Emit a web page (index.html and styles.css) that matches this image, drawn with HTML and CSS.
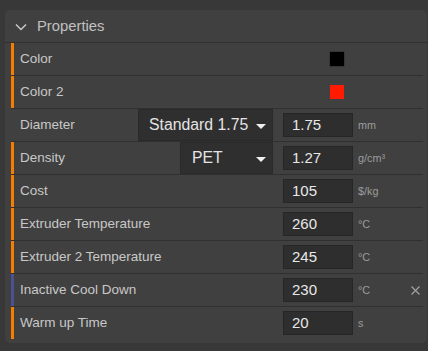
FILE: index.html
```html
<!DOCTYPE html>
<html>
<head>
<meta charset="utf-8">
<link rel="stylesheet" href="styles.css">
</head>
<body>
<div class="panel">
  <div class="header">
    <svg class="chev" width="12" height="8" viewBox="0 0 12 8"><path d="M1 1.5 L6 6.5 L11 1.5" fill="none" stroke="#c8c8c8" stroke-width="1.5"/></svg>
    <span class="title">Properties</span>
  </div>
  <div class="row">
    <div class="bar orange"></div>
    <div class="label">Color</div>
    <div class="swatchcell"><span class="swatch black"></span></div>
  </div>
  <div class="row">
    <div class="bar orange"></div>
    <div class="label">Color 2</div>
    <div class="swatchcell"><span class="swatch red"></span></div>
  </div>
  <div class="row">
    <div class="bar"></div>
    <div class="label">Diameter</div>
    <div class="dropdown wide"><span>Standard 1.75</span><span class="arrow"></span></div>
    <div class="input">1.75</div>
    <div class="unit">mm</div>
    <div class="close"></div>
  </div>
  <div class="row">
    <div class="bar orange"></div>
    <div class="label">Density</div>
    <div class="dropdown narrow"><span>PET</span><span class="arrow"></span></div>
    <div class="input">1.27</div>
    <div class="unit">g/cm³</div>
    <div class="close"></div>
  </div>
  <div class="row">
    <div class="bar orange"></div>
    <div class="label">Cost</div>
    <div class="input">105</div>
    <div class="unit">$/kg</div>
    <div class="close"></div>
  </div>
  <div class="row">
    <div class="bar orange"></div>
    <div class="label">Extruder Temperature</div>
    <div class="input">260</div>
    <div class="unit">°C</div>
    <div class="close"></div>
  </div>
  <div class="row">
    <div class="bar orange"></div>
    <div class="label">Extruder 2 Temperature</div>
    <div class="input">245</div>
    <div class="unit">°C</div>
    <div class="close"></div>
  </div>
  <div class="row">
    <div class="bar blue"></div>
    <div class="label">Inactive Cool Down</div>
    <div class="input">230</div>
    <div class="unit">°C</div>
    <div class="close"><svg width="9" height="9" viewBox="0 0 9 9"><path d="M0.5 0.5 L8.5 8.5 M8.5 0.5 L0.5 8.5" stroke="#a0a0a0" stroke-width="1.2"/></svg></div>
  </div>
  <div class="row last">
    <div class="bar orange"></div>
    <div class="label">Warm up Time</div>
    <div class="input">20</div>
    <div class="unit">s</div>
    <div class="close"></div>
  </div>
</div>
</body>
</html>
```
FILE: styles.css
```css
html, body {
  margin: 0;
  padding: 0;
  background: #383838;
  font-family: "Liberation Sans", Arial, sans-serif;
}
.panel {
  margin: 10px 1px 0 5px;
  background: #404040;
  border-radius: 5px;
  padding: 0 4px 4px 0;
}
.header {
  height: 32px;
  border-bottom: 1px solid #303030;
  margin-right: -4px;
  display: flex;
  align-items: center;
}
.chev {
  margin-left: 10px;
  margin-right: 10px;
  margin-top: 1px;
}
.title {
  font-size: 14.8px;
  color: #c0c0c0;
}
.row {
  margin-left: 6px;
  height: 32px;
  border-bottom: 1px solid #303030;
  display: flex;
  align-items: center;
}
.row.last {
  border-bottom: none;
}
.bar {
  width: 3px;
  align-self: stretch;
  flex: none;
}
.bar.orange { background: #f57d00; }
.bar.blue { background: #4a5294; }
.label {
  flex: 1;
  padding-left: 6px;
  font-size: 13.5px;
  color: #c8c8c8;
  white-space: nowrap;
  margin-top: -1px;
}
.swatchcell {
  width: 93px;
  display: flex;
}
.swatch {
  width: 14px;
  height: 14px;
}
.swatch.black { background: #000; box-shadow: 0 0 0 0.5px #2a2a2a; }
.swatch.red { background: #ff1a00; }
.dropdown {
  align-self: stretch;
  box-sizing: border-box;
  background: #2f2f2f;
  border: 1px solid #2a2a2a;
  margin-right: 10px;
  display: flex;
  align-items: center;
  justify-content: space-between;
  font-size: 15.8px;
  color: #e4e4e4;
  padding: 0 6px 0 10px;
}
.dropdown.wide { width: 135px; }
.dropdown.narrow { width: 93px; padding-left: 11px; }
.arrow {
  width: 0;
  height: 0;
  border-left: 5px solid transparent;
  border-right: 5px solid transparent;
  border-top: 5px solid #f0f0f0;
  margin-top: 2px;
}
.input {
  width: 70px;
  height: 24px;
  box-sizing: border-box;
  background: #2e2e2e;
  border: 1px solid #262626;
  font-size: 15px;
  color: #e8e8e8;
  padding-left: 8px;
  line-height: 22px;
}
.unit {
  width: 50px;
  padding-left: 5px;
  font-size: 10.8px;
  color: #9c9c9c;
}
.close {
  width: 15px;
  display: flex;
  justify-content: center;
  align-items: center;
}
```
